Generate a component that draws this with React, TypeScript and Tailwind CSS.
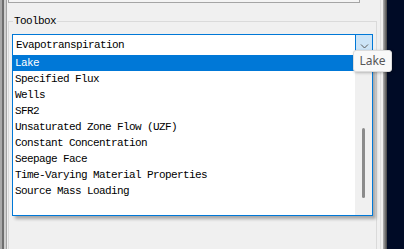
import React from "react";

const items = [
  "Lake",
  "Specified Flux",
  "Wells",
  "SFR2",
  "Unsaturated Zone Flow (UZF)",
  "Constant Concentration",
  "Seepage Face",
  "Time-Varying Material Properties",
  "Source Mass Loading",
];

export default function App() {
  return (
    <div className="relative flex w-[404px] h-[249px] overflow-hidden bg-[#f0f0f0]">
      {/* left strip */}
      <div className="flex h-full shrink-0">
        <div className="w-[2px] bg-[#a9a9a9]" />
        <div className="w-[2px] bg-[#6e6e6e]" />
        <div className="w-[2px] bg-[#cfcfcf]" />
        <div className="w-[1px] bg-[#a3a3a3]" />
      </div>

      {/* main */}
      <div className="flex flex-col w-[370px] shrink-0">
        <div className="ml-[1px] w-[352px] h-[3px] border-l border-r border-b border-[#a5a5a5] bg-[#f4f4f4]" />
        <div className="relative mt-[18px] ml-[1px] w-[369px] flex-1 border-t border-l border-r border-[#dadada]">
          <div className="absolute -top-[9px] left-[4px] px-[1px] bg-[#f0f0f0] text-black [font-family:Liberation_Mono,monospace] text-[11px] leading-[16px] tracking-[-0.6px]">
            Toolbox
          </div>

          {/* combobox */}
          <div className="mt-[12px] ml-[3px] w-[361px] h-[21px] flex border-t border-l border-r border-[#0078d7] bg-white">
            <div className="flex-1 pl-[3px] text-black [font-family:Liberation_Mono,monospace] text-[11px] leading-[20px] tracking-[-0.6px] whitespace-nowrap">
              Evapotranspiration
            </div>
            <div className="w-[17px] h-[20px] border-l border-[#0078d7] bg-[#cce4f7] flex items-center justify-center">
              <svg width="9" height="6" viewBox="0 0 9 6" className="mt-[1px]">
                <path d="M1 1.5 L4.5 5 L8 1.5" fill="none" stroke="#5a5a5a" strokeWidth="1" />
              </svg>
            </div>
          </div>

          {/* dropdown list */}
          <div className="ml-[3px] w-[361px] h-[161px] flex border-l border-r border-b border-[#0078d7] bg-white shadow-[3px_3px_3px_rgba(0,0,0,0.3)]">
            <div className="w-[342px] flex flex-col">
              {items.map((it, i) => (
                <div
                  key={it}
                  className={
                    i === 0
                      ? "h-[16px] pl-[2px] bg-[#0078d7] text-white [font-family:Liberation_Mono,monospace] text-[11px] leading-[16px] tracking-[-0.6px] whitespace-nowrap"
                      : "h-[16px] pl-[2px] text-black [font-family:Liberation_Mono,monospace] text-[11px] leading-[16px] tracking-[-0.6px] whitespace-nowrap"
                  }
                >
                  {it}
                </div>
              ))}
            </div>
            <div className="w-[17px] h-full bg-[#f0f0f0] flex justify-center pt-[73px]">
              <div className="w-[3px] h-[70px] rounded-full bg-[#8b8b8b]" />
            </div>
          </div>
        </div>
      </div>

      {/* right strip */}
      <div className="flex h-full flex-1">
        <div className="w-[3px] bg-[#f0f0f0]" />
        <div className="w-[1px] bg-[#e0e0e0]" />
        <div className="w-[2px] bg-[#f0f0f0]" />
        <div className="w-[4px] bg-gradient-to-r from-[#b4b4b4] to-[#454545]" />
        <div className="flex-1 bg-[#000b26]" />
      </div>

      {/* tooltip */}
      <div className="absolute left-[353px] top-[50px] w-[39px] h-[22px] rounded-[3px] border border-[#dcdcdc] bg-[#f9f9f9] shadow-[1px_1px_3px_rgba(0,0,0,0.25)] flex items-center justify-center">
        <span className="[font-family:Noto_Sans,sans-serif] text-[12px] leading-[16px] text-[#575757]">Lake</span>
      </div>
    </div>
  );
}
